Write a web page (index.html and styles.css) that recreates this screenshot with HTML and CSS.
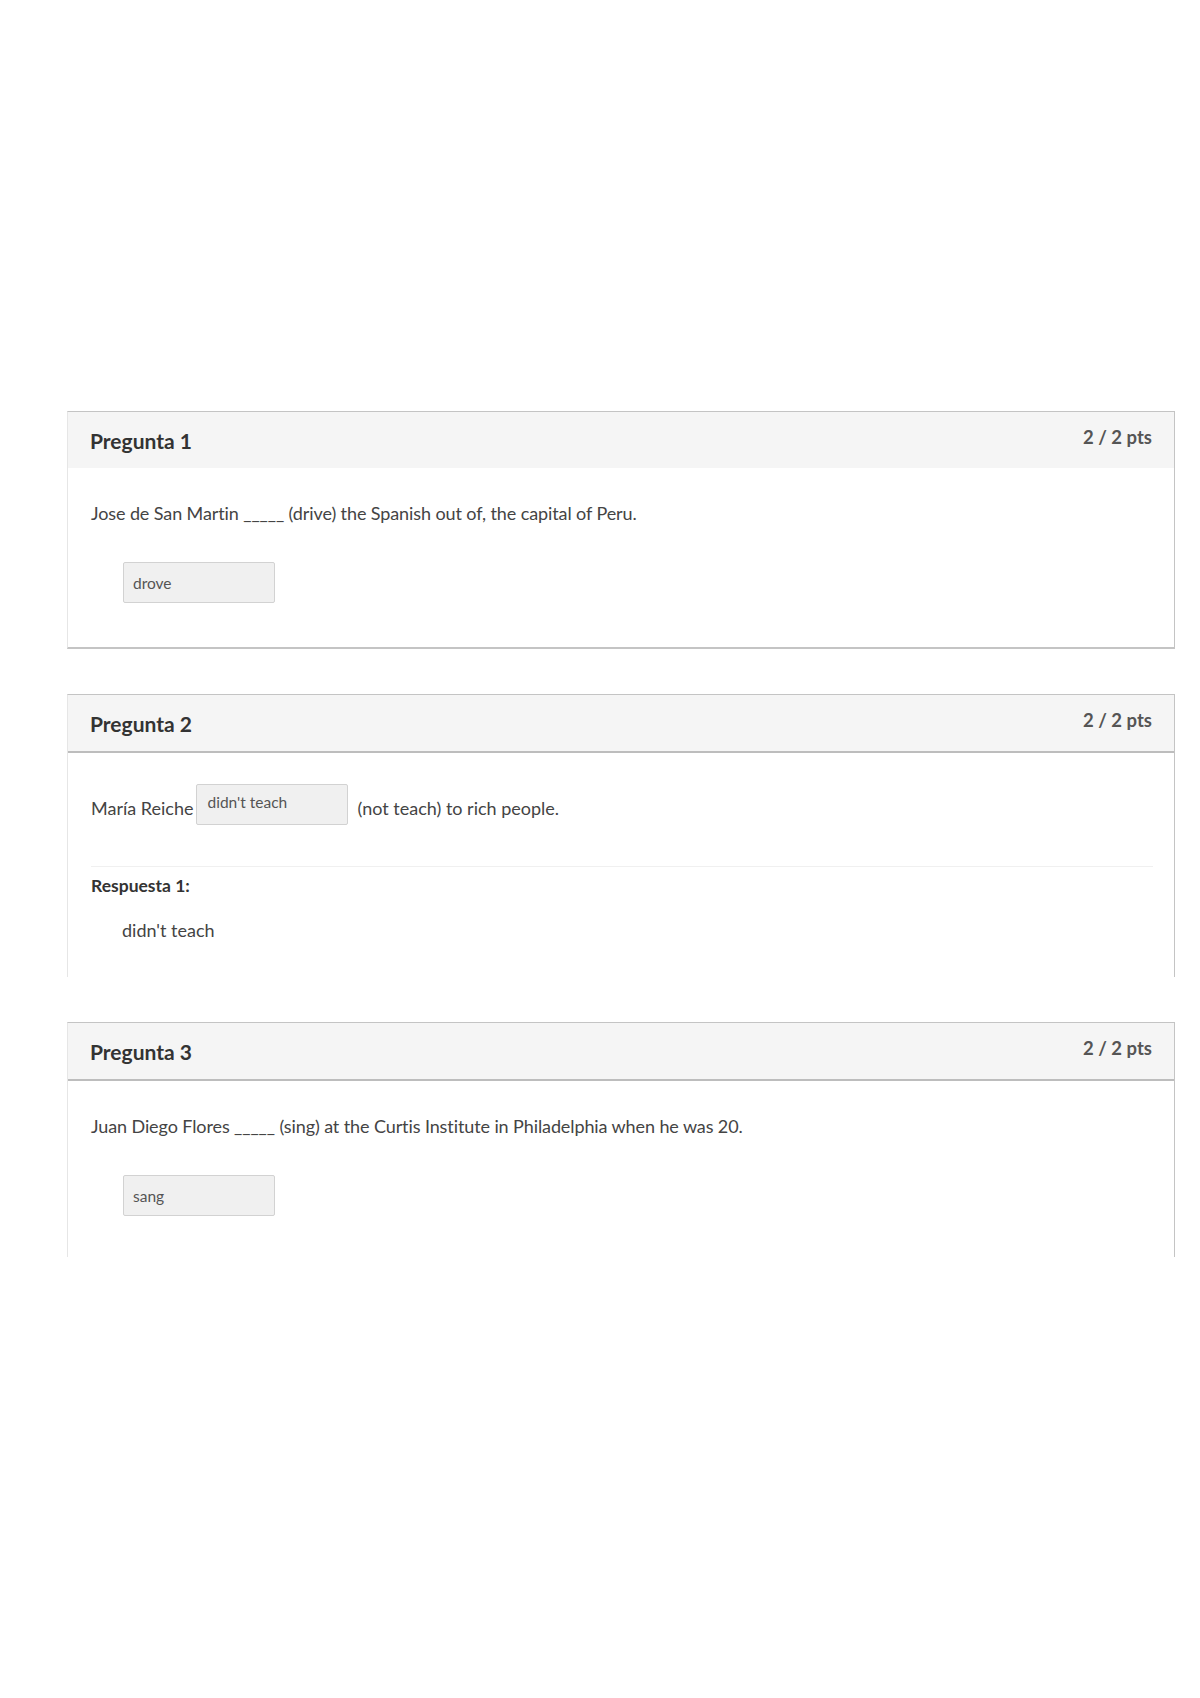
FILE: index.html
```html
<!DOCTYPE html>
<html lang="es">
<head>
<meta charset="utf-8">
<title>Quiz</title>
<link rel="stylesheet" href="styles.css">
</head>
<body>
<main class="page">
  <section class="card card-closed">
    <header class="card-head head-plain">
      <h2 class="q-title">Pregunta 1</h2>
      <span class="q-pts">2 / 2 pts</span>
    </header>
    <div class="card-body">
      <p class="q-text">Jose de San Martin _____ (drive) the Spanish out of, the capital of Peru.</p>
      <div class="answer-box">drove</div>
    </div>
  </section>

  <section class="card card-open">
    <header class="card-head">
      <h2 class="q-title">Pregunta 2</h2>
      <span class="q-pts">2 / 2 pts</span>
    </header>
    <div class="card-body body-2">
      <p class="q-inline">María Reiche <span class="inline-box">didn't teach</span> (not teach) to rich people.</p>
      <div class="divider"></div>
      <p class="resp-label">Respuesta 1:</p>
      <p class="resp-value">didn't teach</p>
    </div>
  </section>

  <section class="card card-open">
    <header class="card-head">
      <h2 class="q-title">Pregunta 3</h2>
      <span class="q-pts">2 / 2 pts</span>
    </header>
    <div class="card-body body-3">
      <p class="q-text">Juan Diego Flores _____ (sing) at the Curtis Institute in Philadelphia when he was 20.</p>
      <div class="answer-box">sang</div>
    </div>
  </section>
</main>
</body>
</html>
```

FILE: styles.css
```css
html, body {
  margin: 0;
  padding: 0;
  background: #ffffff;
}

body {
  font-family: Lato, "Open Sans", "Liberation Sans", sans-serif;
  color: #2d3b45;
}

.page {
  display: flex;
  flex-direction: column;
  gap: 45px;
  padding: 411px 25px 0 67px;
}

.card {
  border: 1px solid #c4c4c4;
  border-left-color: #e6e6e6;
  background: #fff;
}

.card-open {
  border-bottom: none;
}

.card-closed {
  border-bottom: 2px solid #c4c4c4;
}

.card-head {
  display: flex;
  justify-content: space-between;
  align-items: flex-start;
  background: #f5f5f5;
  height: 58px;
  box-sizing: border-box;
  padding: 0 22px 0 22px;
  border-bottom: 2px solid #bdbdbd;
}

.head-plain {
  height: 56px;
  border-bottom: none;
}

.q-title {
  margin: 0;
  padding-top: 17px;
  font-size: 21px;
  font-weight: 700;
  line-height: 24px;
  color: #333;
}

.q-pts {
  padding-top: 14px;
  font-size: 18.5px;
  font-weight: 700;
  line-height: 22px;
  color: #555;
}

.card-body {
  padding: 35px 23px 44px 23px;
}

.body-3 {
  padding-bottom: 41px;
}

.q-text {
  margin: 0;
  font-size: 18px;
  line-height: 20px;
  color: #444;
  letter-spacing: -0.1px;
}

.answer-box {
  display: flex;
  align-items: center;
  margin: 39px 0 0 32px;
  width: 152px;
  height: 41px;
  box-sizing: border-box;
  padding: 0 9px;
  background: #f0f0f0;
  border: 1px solid #d2d2d2;
  border-radius: 2px;
  font-size: 15.5px;
  color: #555;
}

.body-2 {
  padding: 31px 21px 37px 23px;
}

.q-inline {
  margin: 0;
  display: flex;
  align-items: center;
  gap: 3px;
  font-size: 18px;
  line-height: 20px;
  color: #444;
}

.inline-box {
  display: inline-block;
  width: 152px;
  height: 41px;
  box-sizing: border-box;
  padding: 8px 10px;
  margin: 0 6px 6px 0;
  background: #f0f0f0;
  border: 1px solid #d2d2d2;
  border-radius: 2px;
  font-size: 15.5px;
  line-height: 18px;
  color: #555;
}

.divider {
  margin-top: 35px;
  border-top: 1px solid #f0f0f0;
}

.resp-label {
  margin: 9px 0 0 0;
  font-size: 17.5px;
  font-weight: 700;
  line-height: 20px;
  color: #333;
}

.resp-value {
  margin: 24px 0 0 31px;
  font-size: 18px;
  line-height: 20px;
  color: #444;
}
```
